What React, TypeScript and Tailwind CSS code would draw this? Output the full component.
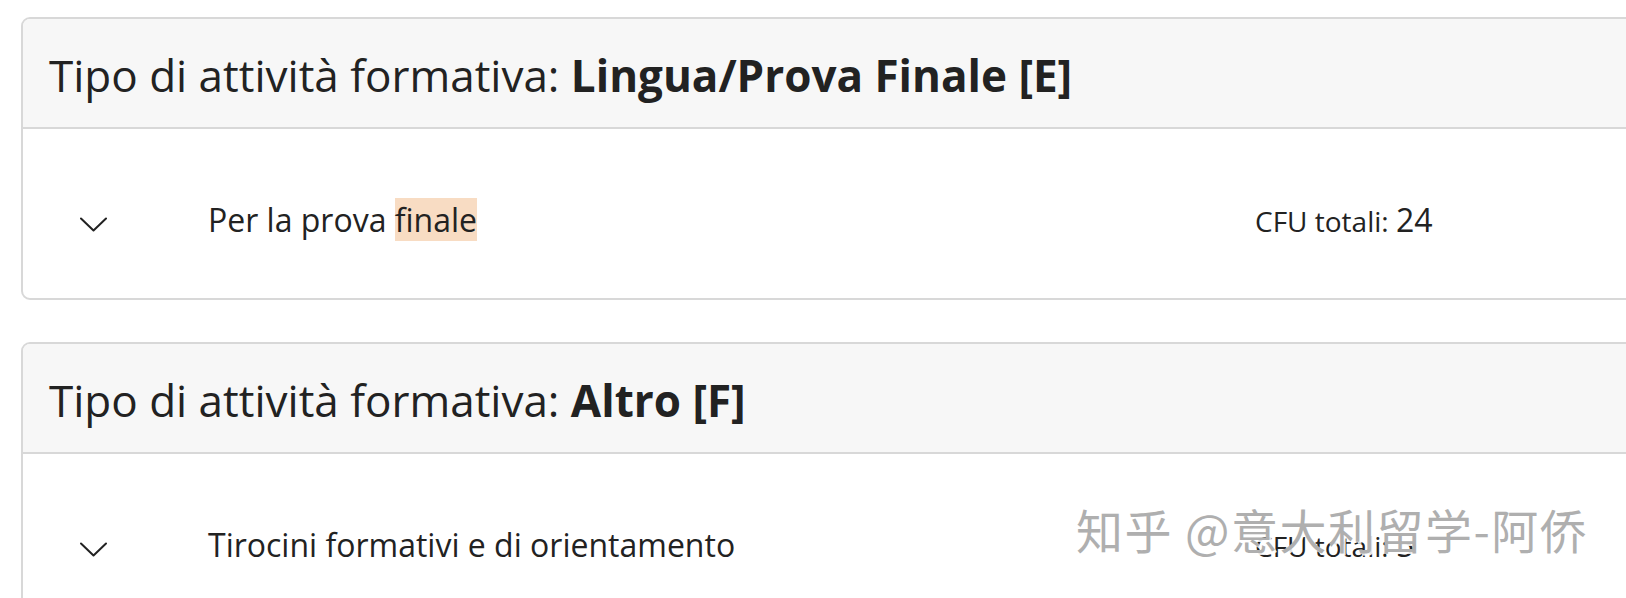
import React from "react";

function Chevron() {
  return (
    <svg width="27" height="15" viewBox="0 0 27 15" fill="none" className="block">
      <path d="M1 1.5 L13.5 13.5 L26 1.5" stroke="#222" strokeWidth="2" strokeLinecap="round" strokeLinejoin="round" />
    </svg>
  );
}

function Card({ type, label, cfu }: { type: string; label: React.ReactNode; cfu: string }) {
  return (
    <div className="w-[1640px] rounded-[9px] border-2 border-[#d8d8d8] bg-white overflow-hidden">
      <div className="h-[110px] bg-[#f7f7f7] border-b-2 border-[#d8d8d8] flex items-center px-[26px]">
        <h2 className="text-[44px] leading-[60px] text-[#222] font-normal pt-[4px]">
          Tipo di attività formativa: <span className="font-bold">{type}</span>
        </h2>
      </div>
      <div className="h-[169px] flex items-start pt-[69px]">
        <div className="ml-[57px] w-[27px] pt-[19px]">
          <Chevron />
        </div>
        <div className="ml-[101px] w-[1047px] text-[32px] leading-[44px] text-[#222]">{label}</div>
        <div className="text-[#222] whitespace-nowrap">
          <span className="text-[28px] leading-[44px]">CFU totali: </span>
          <span className="text-[32px] leading-[44px]">{cfu}</span>
        </div>
      </div>
    </div>
  );
}

export default function App() {
  return (
    <div
      className="relative w-[1626px] h-[598px] overflow-hidden bg-white"
      style={{ fontFamily: '"Open Sans", "Noto Sans", sans-serif' }}
    >
      <div className="pt-[17px] pl-[21px] flex flex-col gap-[42px]">
        <Card
          type="Lingua/Prova Finale [E]"
          label={
            <>
              Per la prova <mark className="bg-[#f8dcc3] text-[#222]">finale</mark>
            </>
          }
          cfu="24"
        />
        <Card type="Altro [F]" label="Tirocini formativi e di orientamento" cfu="5" />
      </div>
      <div
        className="absolute left-[1076px] top-[499px] text-[47px] leading-[60px] tracking-[1.5px] text-[#afafaf] whitespace-nowrap [text-shadow:2px_2px_0_rgba(255,255,255,0.9)]"
        style={{ fontFamily: '"Noto Sans CJK SC", "Noto Sans", sans-serif' }}
      >
        知乎 @意大利留学-阿侨
      </div>
    </div>
  );
}
